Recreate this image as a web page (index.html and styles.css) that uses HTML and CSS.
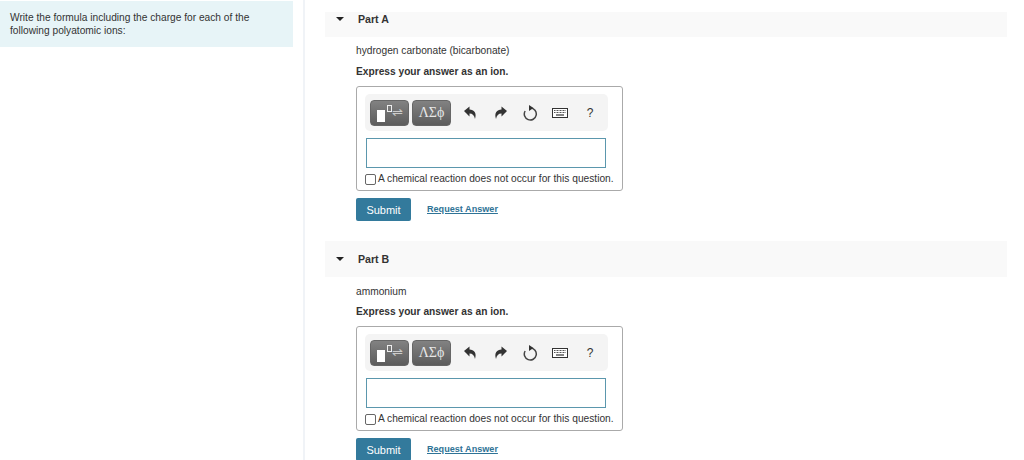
FILE: index.html
```html
<!DOCTYPE html>
<html lang="en">
<head>
  <meta charset="UTF-8" />
  <title>Polyatomic Ions</title>
  <link rel="stylesheet" href="styles.css">
</head>
<body>
  <svg class="defs" width="0" height="0">
    <symbol id="undo" viewBox="0 0 13 13"><path d="M0 5 5.500 .5v3C10 3.500 13 7 11 13 10.500 9.500 8.500 7.500 5.500 7.500v3z" fill="#333"/></symbol>
    <symbol id="redo" viewBox="0 0 13 13"><path d="M13 5 7.500 .5v3C3 3.500 0 7 2 13 2.500 9.500 4.500 7.500 7.500 7.500v3z" fill="#333"/></symbol>
    <symbol id="reset" viewBox="0 0 16 16"><path d="M8.500 3a6 6 0 1 1-5.400 3" fill="none" stroke="#444" stroke-width="1.500"/><path d="M7 0 11.500 3 7 6z" fill="#333"/></symbol>
    <symbol id="keyboard" viewBox="0 0 16 10"><rect x=".5" y=".5" width="15" height="9" fill="#fff" stroke="#333"/><path d="M2 2.500h12M2 4.500h12" stroke="#555" stroke-width="1" stroke-dasharray="1 .5"/><path d="M4 7h8" stroke="#333" stroke-width="1.200"/></symbol>
  </svg>

  <div class="sidebar">
    <div class="intro">Write the formula including the charge for each of the following polyatomic ions:</div>
  </div>

  <div class="content">
    <div class="part part-a">
      <div class="part-header"><span class="caret"></span><span class="part-title">Part A</span></div>
      <p class="ion">hydrogen carbonate (bicarbonate)</p>
      <p class="hint">Express your answer as an ion.</p>
      <div class="answer-box">
        <div class="toolbar">
          <button class="tool-btn tool-template"><span class="tpl-big"></span><span class="tpl-small"></span><span class="tpl-arrows">⇌</span></button>
          <button class="tool-btn tool-greek">ΛΣϕ</button>
          <span class="tool-icon"><svg width="13" height="13"><use href="#undo"/></svg></span>
          <span class="tool-icon"><svg width="13" height="13"><use href="#redo"/></svg></span>
          <span class="tool-icon"><svg width="16" height="16"><use href="#reset"/></svg></span>
          <span class="tool-icon"><svg width="16" height="10"><use href="#keyboard"/></svg></span>
          <span class="tool-icon tool-help">?</span>
        </div>
        <div class="answer-input"></div>
        <label class="no-reaction"><span class="checkbox"></span>A chemical reaction does not occur for this question.</label>
      </div>
      <div class="actions">
        <button class="submit">Submit</button>
        <a class="request" href="#">Request Answer</a>
      </div>
    </div>

    <div class="part part-b">
      <div class="part-header"><span class="caret"></span><span class="part-title">Part B</span></div>
      <p class="ion">ammonium</p>
      <p class="hint">Express your answer as an ion.</p>
      <div class="answer-box">
        <div class="toolbar">
          <button class="tool-btn tool-template"><span class="tpl-big"></span><span class="tpl-small"></span><span class="tpl-arrows">⇌</span></button>
          <button class="tool-btn tool-greek">ΛΣϕ</button>
          <span class="tool-icon"><svg width="13" height="13"><use href="#undo"/></svg></span>
          <span class="tool-icon"><svg width="13" height="13"><use href="#redo"/></svg></span>
          <span class="tool-icon"><svg width="16" height="16"><use href="#reset"/></svg></span>
          <span class="tool-icon"><svg width="16" height="10"><use href="#keyboard"/></svg></span>
          <span class="tool-icon tool-help">?</span>
        </div>
        <div class="answer-input"></div>
        <label class="no-reaction"><span class="checkbox"></span>A chemical reaction does not occur for this question.</label>
      </div>
      <div class="actions">
        <button class="submit">Submit</button>
        <a class="request" href="#">Request Answer</a>
      </div>
    </div>
  </div>
</body>
</html>
```

FILE: styles.css
```css
html, body {
  height: 460px;
  overflow: hidden;
}

body {
  margin: 0;
  display: flex;
  background: #fff;
  color: #333;
  font-family: "Liberation Sans", Arial, sans-serif;
  font-size: 10.2px;
}

.defs {
  position: absolute;
}

.sidebar {
  width: 305px;
  height: 460px;
  flex: none;
  padding: 1px 10px 0 0;
  box-sizing: border-box;
  border-right: 2px solid #f0f3f7;
}

.intro {
  height: 46px;
  box-sizing: border-box;
  padding: 10px 30px 0 10px;
  background: #e7f4f7;
  line-height: 13px;
}

.content {
  flex-grow: 1;
  padding: 12px 17px 0 20px;
}

.part-header {
  display: flex;
  align-items: center;
  background: #f9f9f9;
}

.part-a .part-header {
  height: 14px;
  padding-bottom: 11px;
}

.part-b .part-header {
  height: 36px;
}

.caret {
  width: 0;
  height: 0;
  margin-left: 11px;
  border-left: 4px solid transparent;
  border-right: 4px solid transparent;
  border-top: 4px solid #222;
}

.part-title {
  margin-left: 14px;
  font-size: 10.6px;
  font-weight: bold;
}

.ion, .hint {
  margin: 0 0 0 31px;
  line-height: 14px;
}

.part-a .ion {
  margin-top: 7px;
}

.part-b .ion {
  margin-top: 8px;
}

.hint {
  margin-top: 7px;
  font-weight: bold;
}

.part-b .hint {
  margin-top: 6px;
}

.answer-box {
  width: 267px;
  height: 105px;
  box-sizing: border-box;
  margin: 7px 0 0 31px;
  padding: 7px 8px 0;
  border: 1px solid #aaa;
  border-radius: 3px;
}

.toolbar {
  display: flex;
  align-items: center;
  width: 243px;
  height: 37px;
  box-sizing: border-box;
  padding-left: 5px;
  background: #f4f4f4;
  border-radius: 5px;
}

.tool-btn {
  position: relative;
  flex: none;
  width: 39px;
  height: 26px;
  margin-right: 3px;
  padding: 0;
  border: 1px solid #666;
  border-radius: 4px;
  background: linear-gradient(#828282, #5c5c5c);
  color: #e8e8e8;
}

.tool-greek {
  margin-right: 4px;
  font-family: "Liberation Serif", serif;
  font-size: 14px;
}

.tpl-big {
  position: absolute;
  left: 6px;
  top: 9px;
  width: 8px;
  height: 12px;
  background: #fff;
}

.tpl-small {
  position: absolute;
  left: 16px;
  top: 4px;
  width: 3px;
  height: 5px;
  border: 1px solid #eee;
}

.tpl-arrows {
  position: absolute;
  left: 21px;
  top: 5px;
  font-size: 13px;
  line-height: 14px;
  color: #ccc;
}

.tool-icon {
  display: flex;
  flex: none;
  align-items: center;
  justify-content: center;
  width: 30px;
}

.tool-help {
  font-size: 12px;
}

.answer-input {
  width: 240px;
  height: 30px;
  box-sizing: border-box;
  margin: 7px 0 0 1px;
  border: 1px solid #5b97ad;
}

.no-reaction {
  display: flex;
  align-items: center;
  margin-top: 4px;
  line-height: 13px;
  white-space: nowrap;
}

.checkbox {
  flex: none;
  width: 9px;
  height: 9px;
  margin: 1px 2px 0 0;
  border: 1px solid #666;
  border-radius: 2px;
}

.actions {
  display: flex;
  align-items: center;
  margin: 7px 0 0 31px;
}

.submit {
  width: 55px;
  height: 23px;
  padding: 0;
  border: none;
  border-radius: 2px;
  background: #337a9c;
  color: #fff;
  font: 11px "Liberation Sans", Arial, sans-serif;
}

.request {
  margin-left: 16px;
  padding-bottom: 2px;
  color: #2f7396;
  font-size: 9.1px;
  font-weight: bold;
}

.part-b {
  margin-top: 20px;
}
```
